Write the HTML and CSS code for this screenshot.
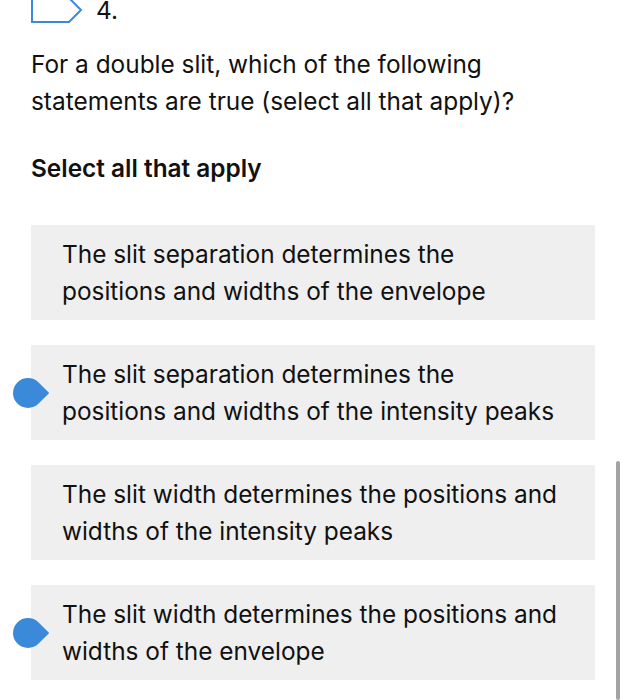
FILE: index.html
```html
<!DOCTYPE html>
<html lang="en">
<head>
  <meta charset="UTF-8" />
  <meta name="viewport" content="width=device-width, initial-scale=1.0" />
  <title>Question 4</title>
  <link rel="stylesheet" href="styles.css">
</head>
<body>
  <div class="page">
    <div class="q-head">
      <svg class="flag" width="52" height="26" viewBox="0 0 52 26">
        <path d="M1 1 H38 L50 13 L38 25 H1 Z" fill="none" stroke="#3b8ada" stroke-width="2" />
      </svg>
      <span class="q-num">4.</span>
    </div>

    <p class="prompt">For a double slit, which of the following statements are true (select all that apply)?</p>

    <div class="hint">Select all that apply</div>

    <div class="options">
      <div class="option">
        <span class="text">The slit separation determines the positions and widths of the envelope</span>
      </div>
      <div class="option selected">
        <span class="dot"></span>
        <span class="text">The slit separation determines the positions and widths of the intensity peaks</span>
      </div>
      <div class="option">
        <span class="text">The slit width determines the positions and widths of the intensity peaks</span>
      </div>
      <div class="option selected">
        <span class="dot"></span>
        <span class="text">The slit width determines the positions and widths of the envelope</span>
      </div>
    </div>
  </div>
  <div class="scrollbar"></div>
</body>
</html>
```

FILE: styles.css
```css
body {
  margin: 0;
  background: #ffffff;
  font-family: Inter, "Open Sans", sans-serif;
  color: #111111;
  overflow: hidden;
}

.page {
  padding: 0 31px 0 31px;
}

.q-head {
  display: flex;
  align-items: flex-start;
  gap: 13px;
}

.flag {
  display: block;
  margin-top: -3px;
}

.q-num {
  font-size: 24.4px;
  line-height: 20px;
}

.prompt {
  margin: 23px 0 0 0;
  font-size: 24.4px;
  line-height: 37px;
  padding-right: 80px;
}

.hint {
  margin-top: 33px;
  font-size: 24.4px;
  font-weight: 600;
  line-height: 30px;
}

.options {
  display: flex;
  flex-direction: column;
  gap: 25px;
  margin-top: 42px;
}

.option {
  position: relative;
  background: #efefef;
  height: 95px;
  display: flex;
  align-items: center;
  padding: 0 30px 0 31px;
}

.option .text {
  font-size: 24.4px;
  line-height: 37px;
}

.dot {
  position: absolute;
  left: -18px;
  top: 50%;
  width: 30px;
  height: 30px;
  margin-top: -15px;
  background: #3b8ada;
  border-radius: 50% 0 50% 50%;
  transform: rotate(45deg);
}

.scrollbar {
  position: absolute;
  right: 6px;
  top: 461px;
  width: 4px;
  height: 239px;
  background: #a3a3a3;
  border-radius: 2px;
}
```
